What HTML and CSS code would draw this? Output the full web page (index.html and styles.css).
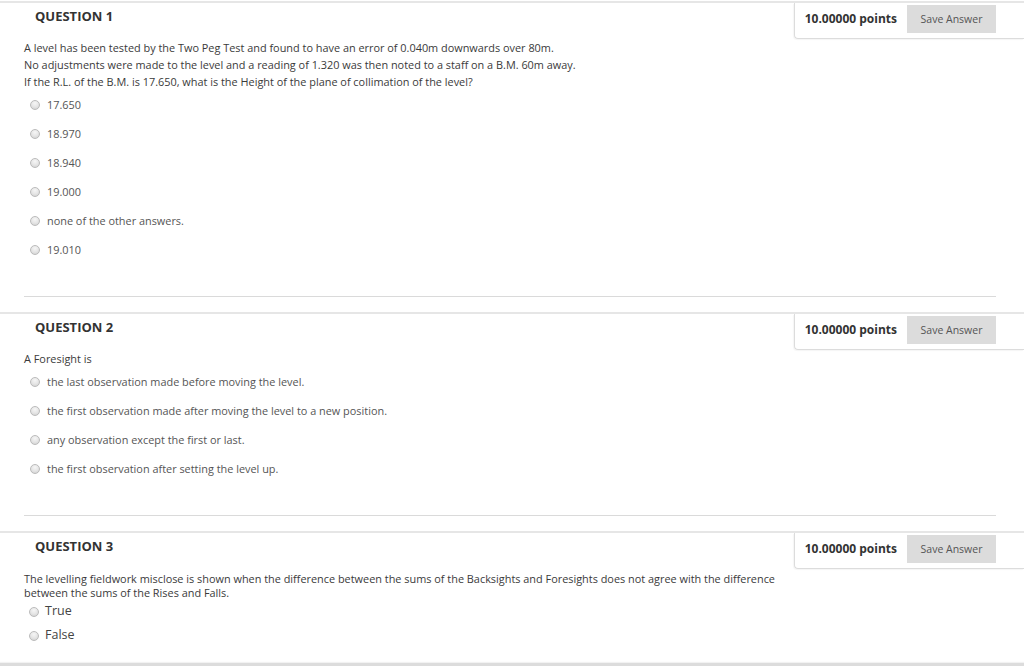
FILE: index.html
```html
<!DOCTYPE html>
<html>
<head>
<meta charset="utf-8">
<link rel="stylesheet" href="styles.css">
</head>
<body>
<div class="page">
  <section class="question">
    <div class="q-head">
      <h3 class="q-title">QUESTION 1</h3>
      <div class="points"><span class="pts">10.00000 points</span><button class="save">Save Answer</button></div>
    </div>
    <div class="q-body">
      <p class="q-text">A level has been tested by the Two Peg Test and found to have an error of 0.040m downwards over 80m.<br>No adjustments were made to the level and a reading of 1.320 was then noted to a staff on a B.M. 60m away.<br>If the R.L. of the B.M. is 17.650, what is the Height of the plane of collimation of the level?</p>
      <ul class="options">
        <li><input type="radio" name="q1"><span>17.650</span></li>
        <li><input type="radio" name="q1"><span>18.970</span></li>
        <li><input type="radio" name="q1"><span>18.940</span></li>
        <li><input type="radio" name="q1"><span>19.000</span></li>
        <li><input type="radio" name="q1"><span>none of the other answers.</span></li>
        <li><input type="radio" name="q1"><span>19.010</span></li>
      </ul>
      <hr class="sep">
    </div>
  </section>

  <section class="question">
    <div class="q-head">
      <h3 class="q-title">QUESTION 2</h3>
      <div class="points"><span class="pts">10.00000 points</span><button class="save">Save Answer</button></div>
    </div>
    <div class="q-body">
      <p class="q-text">A Foresight is</p>
      <ul class="options">
        <li><input type="radio" name="q2"><span>the last observation made before moving the level.</span></li>
        <li><input type="radio" name="q2"><span>the first observation made after moving the level to a new position.</span></li>
        <li><input type="radio" name="q2"><span>any observation except the first or last.</span></li>
        <li><input type="radio" name="q2"><span>the first observation after setting the level up.</span></li>
      </ul>
      <hr class="sep">
    </div>
  </section>

  <section class="question">
    <div class="q-head">
      <h3 class="q-title">QUESTION 3</h3>
      <div class="points"><span class="pts">10.00000 points</span><button class="save">Save Answer</button></div>
    </div>
    <div class="q-body">
      <p class="q-text tight">The levelling fieldwork misclose is shown when the difference between the sums of the Backsights and Foresights does not agree with the difference between the sums of the Rises and Falls.</p>
      <ul class="options tf">
        <li><input type="radio" name="q3"><span>True</span></li>
        <li><input type="radio" name="q3"><span>False</span></li>
      </ul>
    </div>
  </section>

  <section class="question next"></section>
</div>
</body>
</html>
```

FILE: styles.css
```css
html, body {
  margin: 0;
  padding: 0;
  background: #fff;
}
body {
  font-family: "Open Sans", "Liberation Sans", sans-serif;
  color: #333;
}
.page {
  padding-top: 1px;
  display: flex;
  flex-direction: column;
}
.question {
  border-top: 2px solid #e6e6e6;
}
.q-head {
  display: flex;
  justify-content: space-between;
  align-items: flex-start;
  height: 36px;
}
.q-title {
  margin: 0;
  padding: 5px 0 0 35px;
  font-size: 13px;
  line-height: 16px;
  font-weight: 700;
  color: #333;
}
.points {
  display: flex;
  align-items: center;
  gap: 10px;
  height: 36px;
  box-sizing: border-box;
  padding: 2px 28px 6px 10px;
  border-left: 1px solid #dcdcdc;
  border-bottom: 1px solid #dcdcdc;
  border-bottom-left-radius: 4px;
  box-shadow: -1px 1px 1px rgba(0,0,0,0.04);
}
.pts {
  font-size: 12px;
  font-weight: 700;
  color: #333;
}
.save {
  width: 89px;
  height: 28px;
  border: none;
  border-radius: 0;
  background: #dcdcdc;
  font-family: "Open Sans", "Liberation Sans", sans-serif;
  font-size: 10.5px;
  color: #555;
  padding: 0;
}
.q-body {
  padding: 0 28px 0 24px;
}
.q-text {
  margin: 0;
  font-size: 10.9px;
  line-height: 17px;
  color: #3a3a3a;
  max-width: 760px;
}
.q-text.tight {
  line-height: 14px;
  padding-top: 3px;
}
.options {
  list-style: none;
  margin: 0;
  padding: 0 0 0 6px;
}
.options li {
  display: flex;
  align-items: center;
  gap: 7px;
  height: 29px;
  font-size: 10.9px;
  color: #555;
}
.options input {
  appearance: none;
  -webkit-appearance: none;
  margin: 0;
  width: 10px;
  height: 10px;
  border-radius: 50%;
  border: 1px solid #bbbbbb;
  background: radial-gradient(circle at 50% 30%, #f6f6f6 0%, #e6e6e6 50%, #cfcfcf 100%);
  box-sizing: border-box;
}
.options.tf {
  margin-top: -2px;
  padding-bottom: 17px;
}
.options.tf li {
  height: 24px;
  font-size: 12.5px;
  color: #444;
  gap: 6px;
}
.options.tf input {
  width: 10px;
  height: 10px;
  margin-top: 4px;
  margin-left: -1px;
}
.sep {
  margin: 32px 0 15px 0;
  border: none;
  border-top: 1px solid #dadada;
  height: 0;
}
.question.next {
  border-top: 3px solid #dcdcdc;
  box-shadow: 0 -1px 1px rgba(0,0,0,0.05);
  height: 20px;
}
```
